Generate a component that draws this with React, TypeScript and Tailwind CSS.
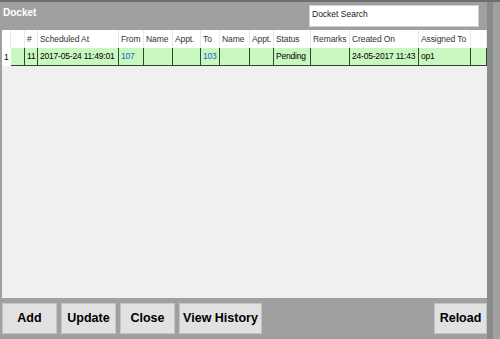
import React from "react";

const cols = [
  { key: "blank", label: "", w: "w-[14px]" },
  { key: "id", label: "#", w: "w-[13px]" },
  { key: "sched", label: "Scheduled At", w: "w-[81px]" },
  { key: "from", label: "From", w: "w-[25px]" },
  { key: "fname", label: "Name", w: "w-[29px]" },
  { key: "fappt", label: "Appt.", w: "w-[28px]" },
  { key: "to", label: "To", w: "w-[19px]" },
  { key: "tname", label: "Name", w: "w-[30px]" },
  { key: "tappt", label: "Appt.", w: "w-[24px]" },
  { key: "status", label: "Status", w: "w-[37px]" },
  { key: "remarks", label: "Remarks", w: "w-[39px]" },
  { key: "created", label: "Created On", w: "w-[69px]" },
  { key: "assigned", label: "Assigned To", w: "w-[52px]" },
  { key: "tail", label: "", w: "w-[16px]" },
];

const row: Record<string, string> = {
  blank: "",
  id: "11",
  sched: "2017-05-24 11:49:01",
  from: "107",
  fname: "",
  fappt: "",
  to: "103",
  tname: "",
  tappt: "",
  status: "Pending",
  remarks: "",
  created: "24-05-2017 11:43",
  assigned: "op1",
  tail: "",
};

function Btn({ label, w }: { label: string; w: string }) {
  return (
    <button
      className={`${w} h-[31px] bg-[#e1e1e1] border border-[#c4c4c4] text-[12.5px] font-bold text-black whitespace-nowrap`}
    >
      {label}
    </button>
  );
}

export default function App() {
  return (
    <div
      className="w-[500px] h-[339px] bg-[#a0a0a0] border-t-2 border-[#6e6e6e] flex overflow-hidden"
      style={{ fontFamily: '"Liberation Sans", Arial, sans-serif' }}
    >
      <div className="w-[487px] flex flex-col">
        {/* title + search */}
        <div className="h-[28px] flex items-start justify-between pl-[3px] pr-[8px]">
          <div className="mt-[6px] text-[10px] font-bold text-white leading-none">Docket</div>
          <div className="mt-[3px] w-[170px] h-[22px] bg-white border border-[#d0d0d0] px-[2px] pt-[4px] text-[8.5px] leading-none text-[#222]">
            Docket Search
          </div>
        </div>

        {/* grid */}
        <div className="ml-[2px] h-[268px] bg-[#f0f0f0] flex flex-col">
          <div className="flex h-[18px] bg-white">
            <div className="w-[9px] border-r border-[#e8e8e8]" />
            {cols.map((c) => (
              <div
                key={c.key}
                className={`${c.w} shrink-0 border-r border-[#e8e8e8] pl-[2px] text-[8.5px] tracking-[-0.1px] leading-[18px] text-[#333] whitespace-nowrap overflow-hidden`}
              >
                {c.label}
              </div>
            ))}
          </div>
          <div className="flex h-[18px]">
            <div className="w-[9px] bg-white text-[8.5px] leading-[18px] pl-[2px] text-black">1</div>
            {cols.map((c) => (
              <div
                key={c.key}
                className={`${c.w} shrink-0 bg-[#c8f8c0] border-r border-b border-[#2a4a2a] pl-[2px] text-[8.5px] tracking-[-0.2px] leading-[17px] whitespace-nowrap overflow-hidden ${
                  c.key === "from" || c.key === "to" ? "text-[#2060d0]" : "text-black"
                }`}
              >
                {row[c.key]}
              </div>
            ))}
          </div>
        </div>

        {/* buttons */}
        <div className="flex gap-[4px] pl-[2px] pt-[5px]">
          <Btn label="Add" w="w-[55px]" />
          <Btn label="Update" w="w-[55px]" />
          <Btn label="Close" w="w-[55px]" />
          <Btn label="View History" w="w-[83px]" />
          <div className="flex-1" />
          <Btn label="Reload" w="w-[53px]" />
        </div>
      </div>
      <div className="w-[6px] h-full bg-[#8a8a8a]" />
      <div className="flex-1" />
    </div>
  );
}
